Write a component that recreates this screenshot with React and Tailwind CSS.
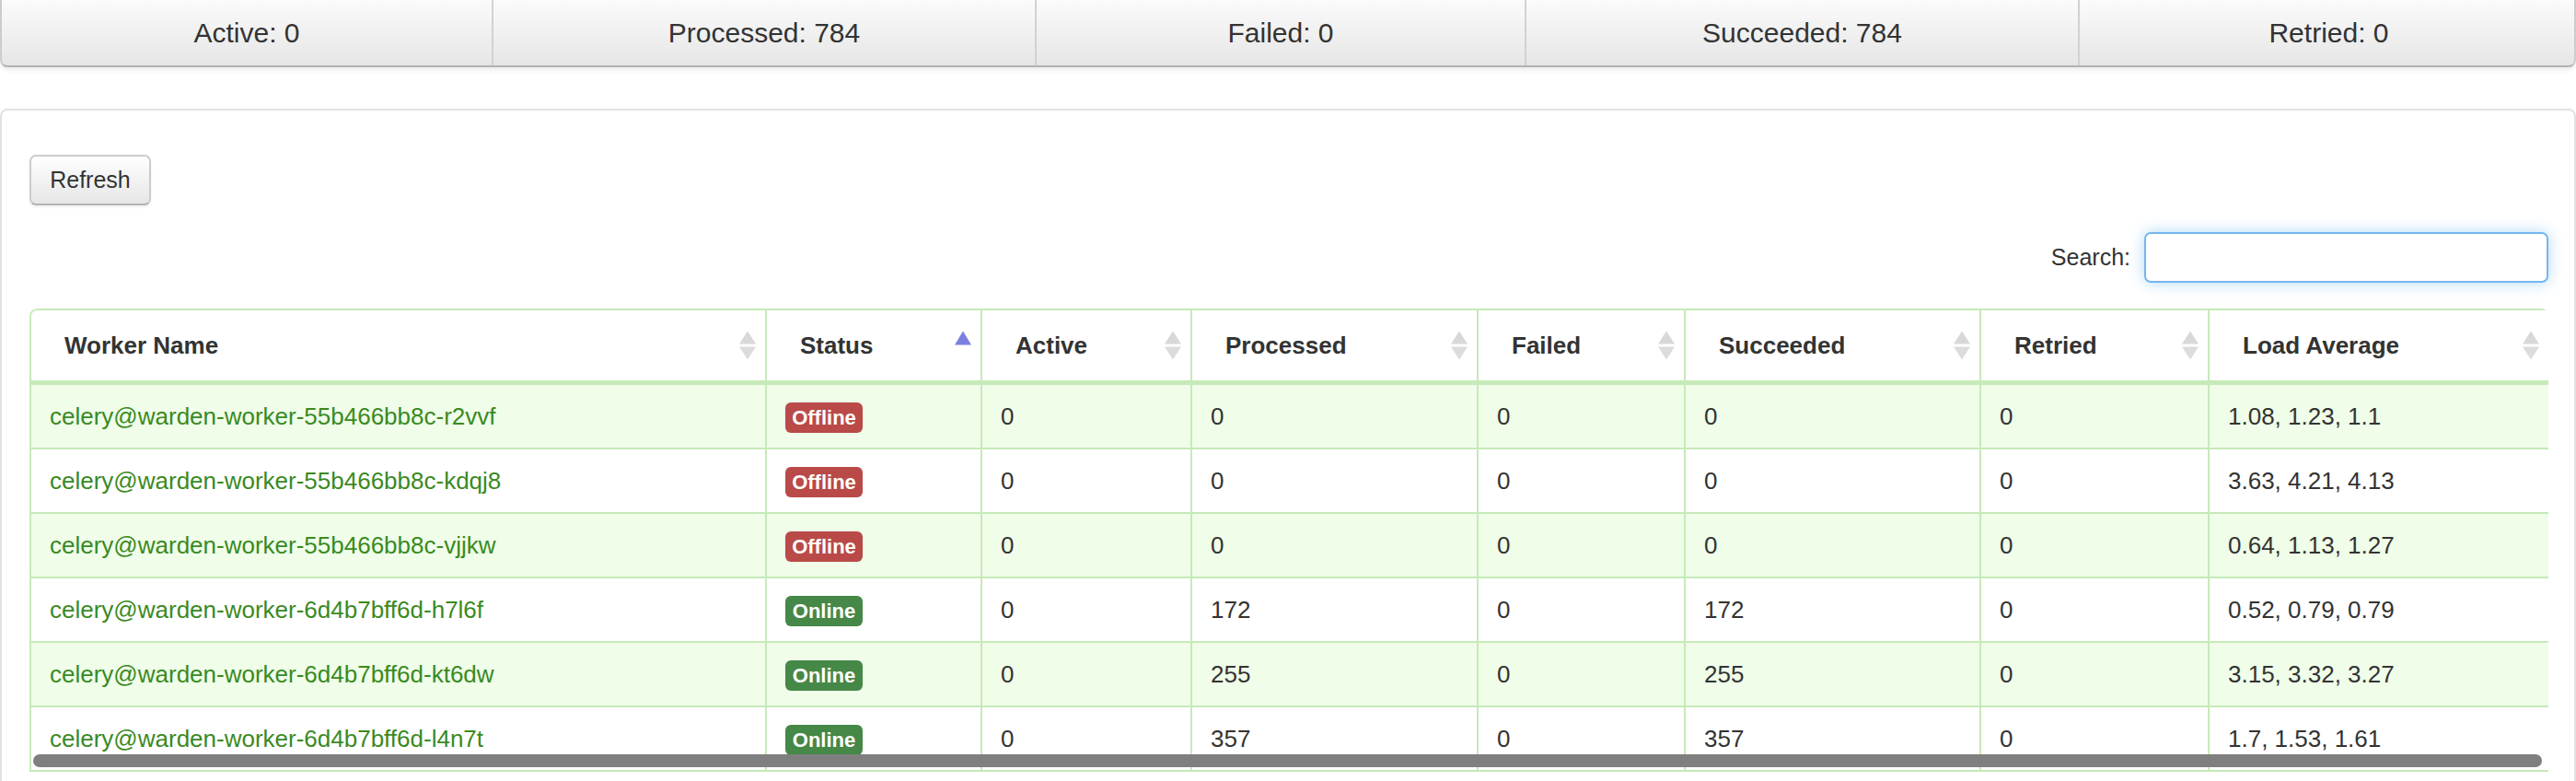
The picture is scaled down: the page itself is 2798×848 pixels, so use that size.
import React from "react";

const stats = [
  { label: "Active: 0", w: "w-[532px]" },
  { label: "Processed: 784", w: "w-[590px]" },
  { label: "Failed: 0", w: "w-[532px]" },
  { label: "Succeeded: 784", w: "w-[601px]" },
  { label: "Retried: 0", w: "w-[543px]" },
];

const columns = [
  { title: "Worker Name", w: "801px" },
  { title: "Status", w: "234px", sorted: true },
  { title: "Active", w: "228px" },
  { title: "Processed", w: "311px" },
  { title: "Failed", w: "225px" },
  { title: "Succeeded", w: "321px" },
  { title: "Retried", w: "248px" },
  { title: "Load Average", w: "368px" },
];

const workers = [
  { name: "celery@warden-worker-55b466bb8c-r2vvf", online: false, active: 0, processed: 0, failed: 0, succeeded: 0, retried: 0, load: "1.08, 1.23, 1.1" },
  { name: "celery@warden-worker-55b466bb8c-kdqj8", online: false, active: 0, processed: 0, failed: 0, succeeded: 0, retried: 0, load: "3.63, 4.21, 4.13" },
  { name: "celery@warden-worker-55b466bb8c-vjjkw", online: false, active: 0, processed: 0, failed: 0, succeeded: 0, retried: 0, load: "0.64, 1.13, 1.27" },
  { name: "celery@warden-worker-6d4b7bff6d-h7l6f", online: true, active: 0, processed: 172, failed: 0, succeeded: 172, retried: 0, load: "0.52, 0.79, 0.79" },
  { name: "celery@warden-worker-6d4b7bff6d-kt6dw", online: true, active: 0, processed: 255, failed: 0, succeeded: 255, retried: 0, load: "3.15, 3.32, 3.27" },
  { name: "celery@warden-worker-6d4b7bff6d-l4n7t", online: true, active: 0, processed: 357, failed: 0, succeeded: 357, retried: 0, load: "1.7, 1.53, 1.61" },
];

// datatables style sort arrows
const SortIcon = ({ sorted }) => (
  <svg width="18" height="31" viewBox="0 0 18 31" className="absolute right-[10px] top-1/2 -translate-y-1/2">
    {sorted ? (
      <polygon points="9,0 18,15 0,15" fill="#7b80e0" />
    ) : (
      <>
        <polygon points="9,0 18,14 0,14" fill="#d8d8d8" />
        <polygon points="0,17 18,17 9,31" fill="#dcdcdc" />
      </>
    )}
  </svg>
);

const btnCls =
  "bg-gradient-to-b from-white to-[#e6e6e6] text-[#333] border-2 border-[#cccccc] border-b-[#b3b3b3] shadow-[0_2px_3px_rgba(0,0,0,0.06)]";

export default function App() {
  return (
    <div
      className="w-[2798px] h-[848px] overflow-hidden bg-white text-[#333]"
      style={{ fontFamily: '"Liberation Sans", Arial, sans-serif' }}
    >
      {/* stats bar */}
      <div className="flex h-[73px] bg-gradient-to-b from-[#fbfbfb] to-[#e6e6e6] border-2 border-t-0 border-[#cccccc] border-b-[#b3b3b3] rounded-b-[8px] shadow-[0_3px_5px_rgba(0,0,0,0.08)]">
        {stats.map((s, i) => (
          <div
            key={s.label}
            className={`${s.w} shrink-0 flex items-center justify-center text-[30px] ${i > 0 ? "border-l-2 border-[#d2d2d2]" : ""}`}
          >
            {s.label}
          </div>
        ))}
      </div>

      {/* workers panel */}
      <div className="mt-[45px] border-2 border-[#e2e2e2] rounded-[8px] pl-[30px] pr-[28px] pt-[48px] h-[760px]">
        <button className={`${btnCls} w-[132px] h-[55px] rounded-[7px] text-[25px]`}>Refresh</button>

        <div className="flex justify-end items-center gap-[15px] mt-[29px]">
          <label className="text-[25px]">Search:</label>
          <input
            type="text"
            className="w-[439px] h-[55px] rounded-[7px] border-2 border-[#74b6ee] outline-none shadow-[0_0_16px_rgba(82,168,236,0.45)] px-3 text-[25px]"
          />
        </div>

        <div className="relative mt-[28px] w-[2736px] overflow-hidden rounded-tl-[8px] rounded-tr-[8px]">
          <table className="table-fixed border-separate border-spacing-0 w-[2736px]">
            <colgroup>
              {columns.map((c) => (
                <col key={c.title} style={{ width: c.w }} />
              ))}
            </colgroup>
            <thead>
              <tr>
                {columns.map((c, i) => (
                  <th
                    key={c.title}
                    className={`relative h-[83px] text-left font-bold text-[26px] pl-[36px] bg-white border-t-2 border-b-[5px] border-[#c6eab8] ${
                      i === 0 ? "border-l-2 rounded-tl-[8px]" : ""
                    } ${i < columns.length - 1 ? "border-r-2" : ""}`}
                  >
                    {c.title}
                    <SortIcon sorted={c.sorted} />
                  </th>
                ))}
              </tr>
            </thead>
            <tbody>
              {workers.map((w, r) => {
                const cells = [
                  <a href="#" className="text-[#3a8a1e]">{w.name}</a>,
                  <span
                    className={`inline-flex items-center justify-center w-[84px] h-[33px] rounded-[6px] text-white font-bold text-[22px] ${
                      w.online ? "bg-[#468847]" : "bg-[#b94a48]"
                    }`}
                  >
                    {w.online ? "Online" : "Offline"}
                  </span>,
                  w.active,
                  w.processed,
                  w.failed,
                  w.succeeded,
                  w.retried,
                  w.load,
                ];
                return (
                  <tr key={w.name} className={r % 2 === 0 ? "bg-[#effde9]" : "bg-white"}>
                    {cells.map((v, i) => (
                      <td
                        key={i}
                        className={`h-[70px] pl-[20px] text-[26px] whitespace-nowrap border-b-2 border-[#c6eab8] ${
                          i === 0 ? "border-l-2" : ""
                        } ${i < cells.length - 1 ? "border-r-2" : ""}`}
                      >
                        {v}
                      </td>
                    ))}
                  </tr>
                );
              })}
            </tbody>
          </table>
          {/* overlay scrollbar */}
          <div className="absolute left-[4px] right-[7px] top-[484px] h-[14px] rounded-full bg-[#7f7f7f]" />
        </div>
      </div>
    </div>
  );
}
